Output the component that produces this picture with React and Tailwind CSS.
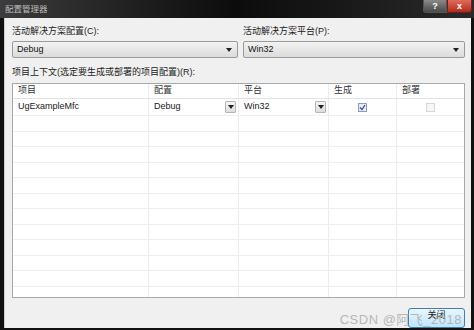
import React from 'react';

const font = { fontFamily: '"Liberation Sans", "Noto Sans CJK SC", sans-serif' };

const cols = ['w-[136px]', 'w-[90px]', 'w-[90px]', 'w-[68px]', 'flex-1'];

const Arrow = () => (
  <svg width="6" height="4" viewBox="0 0 6 4">
    <path d="M0 0 H6 L3 4 Z" fill="#222" />
  </svg>
);

const Combo = ({ value }) => (
  <div className="flex h-[17px] items-center justify-between rounded-[2px] border border-[#9a9a9a] bg-gradient-to-b from-[#f2f2f2] to-[#dcdcdc] pl-[4px] pr-[5px] text-[9px] text-[#111]">
    <span>{value}</span>
    <Arrow />
  </div>
);

const CellDrop = ({ value }) => (
  <div className="flex h-full items-center justify-between pl-[5px] pr-[2px]">
    <span>{value}</span>
    <div className="flex h-[12px] w-[11px] items-center justify-center rounded-[1px] border border-[#b5b5b5] bg-gradient-to-b from-[#f4f4f4] to-[#dddddd]">
      <Arrow />
    </div>
  </div>
);

const Check = ({ checked }) => (
  <div
    className={
      'flex h-[9px] w-[9px] items-center justify-center border ' +
      (checked ? 'border-[#8f9cc0] bg-[#e6ebf6]' : 'border-[#d6d6d6] bg-[#f6f6f6]')
    }
  >
    {checked && (
      <svg width="7" height="7" viewBox="0 0 7 7">
        <path d="M1 3.5 L3 5.5 L6 1" stroke="#3a4a8a" strokeWidth="1.2" fill="none" />
      </svg>
    )}
  </div>
);

export default function App() {
  const emptyRows = Array.from({ length: 12 });

  return (
    <div className="flex h-[330px] w-[474px] flex-col overflow-hidden bg-[#111]" style={font}>
      {/* title bar */}
      <div className="flex h-[18px] items-start justify-between bg-gradient-to-r from-[#3c3c3c] via-[#0c0c0c] to-[#2a2a2a]">
        <span className="pl-[5px] pt-[4px] text-[8.5px] leading-[11px] text-[#bdbdbd]">配置管理器</span>
        <div className="mr-[2px] flex">
          <div className="flex h-[13px] w-[24px] items-center justify-center rounded-bl-[3px] border border-t-0 border-[#555] bg-gradient-to-b from-[#8a8a8a] to-[#4a4a4a] text-[9px] font-bold leading-none text-white">
            ?
          </div>
          <div className="flex h-[13px] w-[25px] items-center justify-center rounded-br-[3px] border border-t-0 border-[#6a2020] bg-gradient-to-b from-[#e06a5a] to-[#b02a1a] text-[9px] font-bold leading-none text-white">
            x
          </div>
        </div>
      </div>

      {/* client */}
      <div className="ml-[4px] mr-[3px] flex h-[310px] flex-col border-l border-[#cfcfcf] bg-[#f0f0f0] pl-[7px] pr-[6px] text-[9px] text-[#222]">
        <div className="mt-[7px] flex gap-[5px]">
          <div className="flex w-[226px] flex-col gap-[3px]">
            <span className="leading-[13px]">活动解决方案配置(C):</span>
            <Combo value="Debug" />
          </div>
          <div className="flex flex-1 flex-col gap-[3px]">
            <span className="leading-[13px]">活动解决方案平台(P):</span>
            <Combo value="Win32" />
          </div>
        </div>

        <span className="mt-[8px] leading-[13px]">项目上下文(选定要生成或部署的项目配置)(R):</span>

        <div className="mt-[4px] h-[215px] overflow-hidden border border-[#a8a8a8] bg-white">
          <div className="flex h-[15px] border-b border-[#e2e2e2] text-[#333]">
            {['项目', '配置', '平台', '生成', '部署'].map((h, i) => (
              <div key={h} className={cols[i] + ' flex items-center pl-[5px] ' + (i < 4 ? 'border-r border-[#ececec]' : '')}>
                {h}
              </div>
            ))}
          </div>
          <div className="flex h-[17px] border-b border-[#efefef]">
            <div className={cols[0] + ' flex items-center border-r border-[#ececec] pl-[5px]'}>UgExampleMfc</div>
            <div className={cols[1] + ' border-r border-[#ececec]'}>
              <CellDrop value="Debug" />
            </div>
            <div className={cols[2] + ' border-r border-[#ececec]'}>
              <CellDrop value="Win32" />
            </div>
            <div className={cols[3] + ' flex items-center justify-center border-r border-[#ececec]'}>
              <Check checked />
            </div>
            <div className={cols[4] + ' flex items-center justify-center'}>
              <Check />
            </div>
          </div>
          {emptyRows.map((_, r) => (
            <div key={r} className="flex h-[15.5px] border-b border-[#efefef]">
              {cols.map((c, i) => (
                <div key={i} className={c + (i < 4 ? ' border-r border-[#ececec]' : '')} />
              ))}
            </div>
          ))}
        </div>

        <div className="relative mt-[10px] flex justify-end">
          <div className="flex h-[20px] w-[57px] items-center justify-center rounded-[3px] border border-[#3c7fb1] bg-gradient-to-b from-[#eaf6fd] to-[#bee6fd] pb-[4px] text-[9px]">
            关闭
          </div>
          <span className="absolute right-[3px] top-[5px] text-[13px] leading-none tracking-[0.5px] text-[#a8a8a8]/80">
            CSDN @阿飞_2018
          </span>
        </div>
      </div>
    </div>
  );
}
